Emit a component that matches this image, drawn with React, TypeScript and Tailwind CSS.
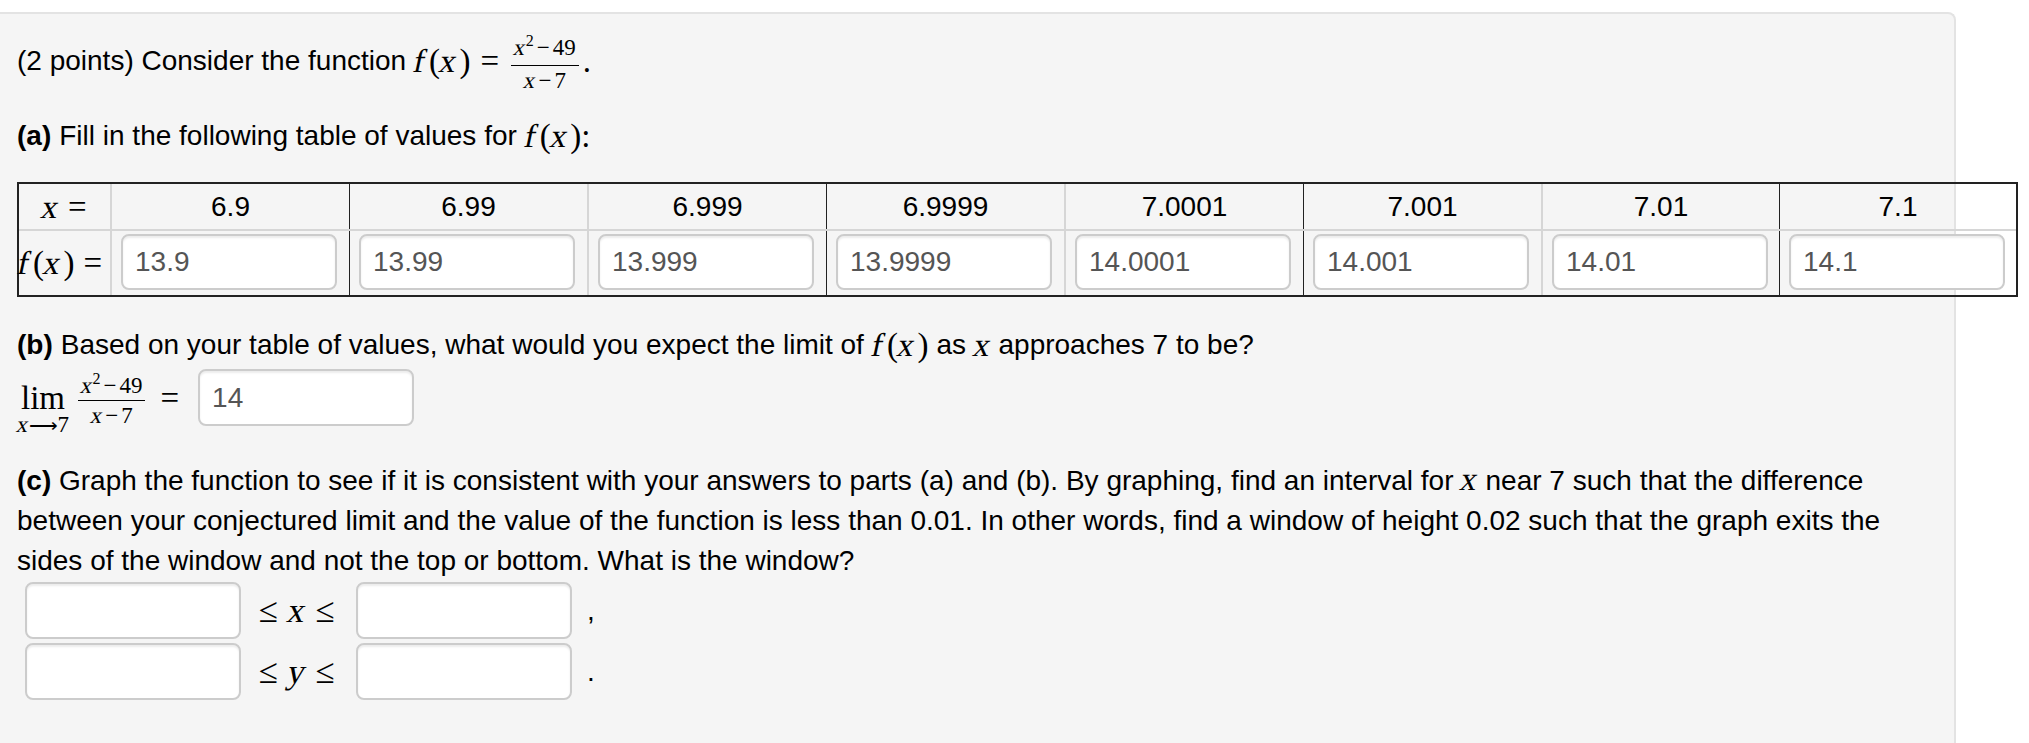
import React from "react";

type Col = { x: string; f: string; cls: string };

const COLS: Col[] = [
  { x: "6.9", f: "13.9", cls: "w-[238px] border-r border-r-[#222]" },
  { x: "6.99", f: "13.99", cls: "w-[239px] border-r-2 border-r-[#d6d6d6]" },
  { x: "6.999", f: "13.999", cls: "w-[238px] border-r border-r-[#222]" },
  { x: "6.9999", f: "13.9999", cls: "w-[239px] border-r-2 border-r-[#d6d6d6]" },
  { x: "7.0001", f: "14.0001", cls: "w-[238px] border-r border-r-[#222]" },
  { x: "7.001", f: "14.001", cls: "w-[239px] border-r-2 border-r-[#d6d6d6]" },
  { x: "7.01", f: "14.01", cls: "w-[237px] border-r border-r-[#222]" },
  { x: "7.1", f: "14.1", cls: "w-[236px]" },
];

// math text, TeX-ish look
function M({ children, className = "" }: { children: React.ReactNode; className?: string }) {
  return (
    <span className={"font-['Liberation_Serif','Times_New_Roman',serif] text-[33px] leading-[40px] " + className}>
      {children}
    </span>
  );
}

// slanted variable (regular serif face, sheared)
function I({ children }: { children: React.ReactNode }) {
  return <span className="inline-block -skew-x-12 font-['Liberation_Serif','Times_New_Roman',serif]">{children}</span>;
}

function Fx() {
  return (
    <>
      <I>f</I>
      <span className="ml-[4px]">(</span>
      <I>x</I>
      <span className="ml-[3px]">)</span>
    </>
  );
}

function Numer() {
  return (
    <>
      <I>x</I>
      <span className="text-[16px] align-[9px]">2</span>
      <span className="mx-[3px]">−</span>49
    </>
  );
}

function Denom() {
  return (
    <>
      <I>x</I>
      <span className="mx-[3px]">−</span>7
    </>
  );
}

function Frac({ loose, className = "" }: { loose: boolean; className?: string }) {
  return (
    <span
      className={
        "inline-flex flex-col items-center font-['Liberation_Serif','Times_New_Roman',serif] text-[23px] " +
        className
      }
    >
      <span className={"px-[3px] leading-[24px] " + (loose ? "pb-[5px]" : "pb-[2px]")}>
        <Numer />
      </span>
      <span className="w-full border-t-[1.5px] border-black" />
      <span className="px-[3px] leading-[24px] pt-[3px]">
        <Denom />
      </span>
    </span>
  );
}

function Box({ value = "", className = "" }: { value?: string; className?: string }) {
  return (
    <input
      readOnly
      defaultValue={value}
      className={
        "w-[216px] rounded-[8px] border-2 border-[#cccccc] bg-white px-[12px] text-[28px] text-[#555] shadow-[inset_0_2px_2px_rgba(0,0,0,0.075)] outline-none font-['Liberation_Sans',Arial,sans-serif] " +
        className
      }
    />
  );
}

function Window({ v, end }: { v: string; end: string }) {
  return (
    <div className="flex items-center">
      <Box className="h-[57px]" />
      <M className="w-[83px] ml-[14px] flex justify-center gap-[10px] text-[35px]">
        <span>≤</span>
        <I>{v}</I>
        <span>≤</span>
      </M>
      <Box className="h-[57px] ml-[18px]" />
      <span className="ml-[15px]">{end}</span>
    </div>
  );
}

export default function App() {
  return (
    <div className="min-h-screen bg-white pt-[12px] font-['Liberation_Sans',Arial,sans-serif] text-[28px] leading-[40px] text-black">
      <div className="w-[1956px] min-h-[731px] bg-[#f5f5f5] border-t-2 border-r-2 border-[#e3e3e3] rounded-tr-[8px] pl-[17px] pt-[27px]">
        {/* title */}
        <div className="flex items-center h-[40px]">
          <span>(2 points) Consider the function</span>
          <M className="ml-[8px]">
            <Fx />
          </M>
          <M className="ml-[10px]">=</M>
          <Frac loose className="ml-[12px]" />
          <M className="ml-[4px]">.</M>
        </div>

        {/* part a */}
        <div className="flex items-center h-[40px] mt-[35px]">
          <b className="font-bold">(a)</b>
          <span className="ml-[8px]">Fill in the following table of values for</span>
          <M className="ml-[8px]">
            <Fx />
          </M>
          <M>:</M>
        </div>

        <div className="mt-[26px] w-[2001px] border-2 border-[#222]">
          <div className="flex h-[47px] border-b-2 border-b-[#d6d6d6]">
            <div className="w-[93px] border-r-2 border-r-[#d6d6d6] flex items-center justify-center">
              <M>
                <I>x</I>
                <span className="ml-[9px]">=</span>
              </M>
            </div>
            {COLS.map((c) => (
              <div key={c.x} className={c.cls + " flex items-center justify-center"}>
                {c.x}
              </div>
            ))}
          </div>
          <div className="flex h-[64px]">
            <div className="w-[93px] border-r-2 border-r-[#d6d6d6] flex items-center">
              <M className="-ml-[1px]">
                <Fx />
                <span className="ml-[9px]">=</span>
              </M>
            </div>
            {COLS.map((c) => (
              <div key={c.x} className={c.cls + " pt-[3px] pl-[9px]"}>
                <Box value={c.f} className="h-[56px]" />
              </div>
            ))}
          </div>
        </div>

        {/* part b */}
        <div className="flex items-center h-[40px] mt-[28px]">
          <b className="font-bold">(b)</b>
          <span className="ml-[8px]">Based on your table of values, what would you expect the limit of</span>
          <M className="ml-[8px]">
            <Fx />
          </M>
          <span className="ml-[8px]">as</span>
          <M className="ml-[8px]">
            <I>x</I>
          </M>
          <span className="ml-[8px]">approaches 7 to be?</span>
        </div>

        <div className="flex items-center h-[65px]">
          <span className="inline-flex flex-col items-center pt-[22px] font-['Liberation_Serif','Times_New_Roman',serif]">
            <span className="text-[33px] leading-[32px]">lim</span>
            <span className="text-[23px] leading-[22px]">
              <I>x</I>
              <span className="text-[20px]">⟶</span>7
            </span>
          </span>
          <Frac loose={false} className="ml-[9px]" />
          <M className="ml-[15px]">=</M>
          <Box value="14" className="h-[57px] ml-[19px]" />
        </div>

        {/* part c */}
        <p className="mt-[29px] w-[1925px]">
          <b className="font-bold">(c)</b> Graph the function to see if it is consistent with your answers to parts (a) and (b). By graphing, find an interval for{" "}
          <M>
            <I>x</I>
          </M>{" "}
          near 7 such that the difference between your conjectured limit and the value of the function is less than 0.01. In other words, find a window of height 0.02 such that the graph exits the sides of the window and not the top or bottom. What is the window?
        </p>

        <div className="flex flex-col gap-[4px] pl-[8px] mt-[1px]">
          <Window v="x" end="," />
          <Window v="y" end="." />
        </div>
      </div>
    </div>
  );
}
